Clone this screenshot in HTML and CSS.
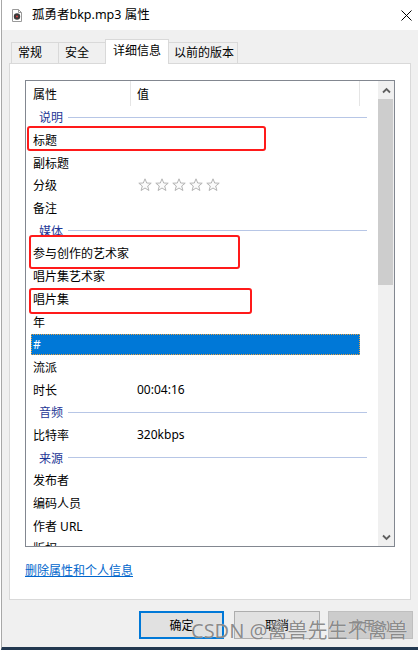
FILE: index.html
```html
<!DOCTYPE html>
<html lang="zh-CN">
<head>
<meta charset="utf-8">
<title>属性</title>
<link rel="stylesheet" href="styles.css">
</head>
<body>
<div class="window">
  <div class="titlebar">
    <svg class="file-icon" width="10" height="13" viewBox="0 0 10 13">
      <path d="M0.5 0.5 H6.5 L9.5 3.5 V12.5 H0.5 Z" fill="#fff" stroke="#9a9a9a"/>
      <path d="M6.5 0.5 V3.5 H9.5" fill="none" stroke="#9a9a9a"/>
      <circle cx="5" cy="7.5" r="3.2" fill="#3a3a3a"/>
      <circle cx="5" cy="7.5" r="1.1" fill="#d04040"/>
    </svg>
    <span class="title">孤勇者bkp.mp3 属性</span>
    <svg class="close" width="11" height="11" viewBox="0 0 11 11">
      <path d="M0.5 0.5 L10.5 10.5 M10.5 0.5 L0.5 10.5" stroke="#000" stroke-width="1"/>
    </svg>
  </div>
  <div class="client">
    <div class="tabs">
      <div class="tab tab-a">常规</div>
      <div class="tab tab-b">安全</div>
      <div class="tab tab-c active">详细信息</div>
      <div class="tab tab-d">以前的版本</div>
    </div>
    <div class="panel">
      <div class="listbox">
        <div class="list-main">
          <div class="header">
            <div class="hcell hcell-name">属性</div>
            <div class="hcell hcell-value">值</div>
          </div>
          <div class="rows">
            <div class="group">说明</div>
            <div class="row"><span class="k">标题</span></div>
            <div class="row"><span class="k">副标题</span></div>
            <div class="row"><span class="k">分级</span>
              <span class="stars">
                <svg width="85" height="14" viewBox="0 0 85 14">
                  <g fill="#fbfbfb" stroke="#b4b4b4" stroke-width="1" stroke-linejoin="round">
                    <polygon points="7,0.8 8.7,5 13.2,5.2 9.7,8 10.9,12.5 7,10 3.1,12.5 4.3,8 0.8,5.2 5.3,5"/>
                    <polygon transform="translate(17 0)" points="7,0.8 8.7,5 13.2,5.2 9.7,8 10.9,12.5 7,10 3.1,12.5 4.3,8 0.8,5.2 5.3,5"/>
                    <polygon transform="translate(34 0)" points="7,0.8 8.7,5 13.2,5.2 9.7,8 10.9,12.5 7,10 3.1,12.5 4.3,8 0.8,5.2 5.3,5"/>
                    <polygon transform="translate(51 0)" points="7,0.8 8.7,5 13.2,5.2 9.7,8 10.9,12.5 7,10 3.1,12.5 4.3,8 0.8,5.2 5.3,5"/>
                    <polygon transform="translate(68 0)" points="7,0.8 8.7,5 13.2,5.2 9.7,8 10.9,12.5 7,10 3.1,12.5 4.3,8 0.8,5.2 5.3,5"/>
                  </g>
                </svg>
              </span>
            </div>
            <div class="row"><span class="k">备注</span></div>
            <div class="group">媒体</div>
            <div class="row"><span class="k">参与创作的艺术家</span></div>
            <div class="row"><span class="k">唱片集艺术家</span></div>
            <div class="row"><span class="k">唱片集</span></div>
            <div class="row"><span class="k">年</span></div>
            <div class="row sel"><span class="k">#</span></div>
            <div class="row"><span class="k">流派</span></div>
            <div class="row"><span class="k">时长</span><span class="v">00:04:16</span></div>
            <div class="group">音频</div>
            <div class="row"><span class="k">比特率</span><span class="v">320kbps</span></div>
            <div class="group">来源</div>
            <div class="row"><span class="k">发布者</span></div>
            <div class="row"><span class="k">编码人员</span></div>
            <div class="row"><span class="k">作者 URL</span></div>
            <div class="row"><span class="k">版权</span></div>
          </div>
        </div>
        <div class="scrollbar">
          <div class="sb-btn">
            <svg width="9" height="7" viewBox="0 0 9 7"><path d="M1 5.5 L4.5 2 L8 5.5" fill="none" stroke="#606060" stroke-width="1.8"/></svg>
          </div>
          <div class="sb-thumb"></div>
          <div class="sb-track"></div>
          <div class="sb-btn">
            <svg width="9" height="7" viewBox="0 0 9 7"><path d="M1 1.5 L4.5 5 L8 1.5" fill="none" stroke="#606060" stroke-width="1.8"/></svg>
          </div>
        </div>
      </div>
      <a class="link" href="#">删除属性和个人信息</a>
    </div>
    <div class="buttons">
      <div class="btn btn-default">确定</div>
      <div class="btn btn-cancel">取消</div>
      <div class="btn btn-disabled">应用(A)</div>
    </div>
  </div>
</div>
<div class="mark mark-1"></div>
<div class="mark mark-2"></div>
<div class="mark mark-3"></div>
<div class="watermark">CSDN @禽兽先生不禽兽</div>
</body>
</html>
```
FILE: styles.css
```css
html, body {
  margin: 0;
  padding: 0;
}
body {
  width: 418px;
  height: 650px;
  overflow: hidden;
  position: relative;
  background: #ffffff;
  font-family: "Noto Sans", "Noto Sans CJK SC", sans-serif;
  font-size: 12px;
  color: #000;
}
.window {
  margin-left: 1px;
  height: 650px;
  box-sizing: border-box;
  border-left: 1px solid #a8a8a8;
  border-bottom: 3px solid #223850;
  display: flex;
  flex-direction: column;
}
.titlebar {
  height: 30px;
  flex: none;
  background: #fff;
  display: flex;
  align-items: center;
  padding-left: 10px;
}
.file-icon {
  margin-right: 10px;
  margin-top: 1px;
}
.title {
  font-size: 12.5px;
  line-height: 16px;
}
.close {
  margin-left: auto;
  margin-right: 6px;
}
.client {
  flex: 1;
  background: #f0f0f0;
  padding: 9px 0 0 7px;
  display: flex;
  flex-direction: column;
}
.tabs {
  display: flex;
  align-items: flex-end;
  height: 24px;
  padding-left: 2px;
  position: relative;
  z-index: 2;
}
.tab {
  height: 21px;
  box-sizing: border-box;
  border: 1px solid #d9d9d9;
  border-bottom: none;
  background: #f0f0f0;
  line-height: 19px;
  margin-left: -1px;
  white-space: nowrap;
}
.tab-a { width: 48px; padding-left: 6px; margin-left: 0; }
.tab-b { width: 48px; padding-left: 6px; }
.tab-c { width: 64px; padding-left: 7px; }
.tab-d { width: 70px; padding-left: 5px; }
.tab.active {
  height: 25px;
  background: #fff;
  margin-bottom: -1px;
  line-height: 21px;
  position: relative;
  z-index: 3;
}
.panel {
  width: 402px;
  height: 537px;
  box-sizing: border-box;
  border: 1px solid #d9d9d9;
  background: #fff;
  padding: 16px 0 0 15px;
  position: relative;
  z-index: 1;
}
.listbox {
  width: 370px;
  height: 467px;
  box-sizing: border-box;
  border: 1px solid #828790;
  display: flex;
  overflow: hidden;
}
.list-main {
  width: 352px;
  display: flex;
  flex-direction: column;
  overflow: hidden;
}
.header {
  height: 25px;
  flex: none;
  display: flex;
}
.hcell {
  height: 100%;
  box-sizing: border-box;
  display: flex;
  align-items: center;
  border-right: 1px solid #e5e5e5;
}
.hcell-name { width: 105px; padding-left: 7px; }
.hcell-value { width: 229px; padding-left: 6px; }
.rows {
  flex: 1;
  overflow: hidden;
}
.row {
  height: 22.7px;
  display: flex;
  align-items: center;
  margin-left: 5px;
  width: 329px;
  box-sizing: border-box;
  white-space: nowrap;
}
.row .k {
  width: 106px;
  padding-left: 2px;
  box-sizing: border-box;
}
.row.sel {
  background: #0078d7;
  color: #fff;
  outline: 1px dotted #e8a040;
  outline-offset: -1px;
  height: 21px;
  margin-top: 0.85px;
  margin-bottom: 0.85px;
}
.stars {
  display: flex;
  align-items: center;
  margin-left: 1px;
}
.group {
  height: 22.7px;
  display: flex;
  align-items: center;
  padding-left: 13px;
  color: #1e3796;
}
.group::after {
  content: "";
  flex: 1;
  height: 1px;
  background: #b7c6e6;
  margin-left: 5px;
  margin-right: 11px;
}
.scrollbar {
  width: 16px;
  background: #f0f0f0;
  display: flex;
  flex-direction: column;
}
.sb-btn {
  height: 18px;
  flex: none;
  display: flex;
  align-items: center;
  justify-content: center;
}
.sb-thumb {
  height: 186px;
  flex: none;
  background: #cdcdcd;
  margin-right: 1px;
}
.sb-track {
  flex: 1;
}
.link {
  display: inline-block;
  margin-top: 16px;
  line-height: 16px;
  color: #0066cc;
  text-decoration: underline;
}
.buttons {
  display: flex;
  justify-content: flex-end;
  margin-top: 11px;
  padding-right: 5px;
}
.btn {
  width: 86px;
  height: 28px;
  box-sizing: border-box;
  display: flex;
  align-items: center;
  justify-content: center;
  background: #e1e1e1;
  border: 1px solid #adadad;
}
.btn-default {
  border: 2px solid #0078d7;
  width: 85px;
}
.btn-cancel { margin-left: 10px; }
.btn-disabled {
  margin-left: 8px;
  width: 85px;
  background: #cccccc;
  border-color: #bfbfbf;
  color: #838383;
}
.mark {
  position: absolute;
  z-index: 10;
  box-sizing: border-box;
  border: 2.5px solid #ff1a1a;
  border-radius: 3px;
}
.mark-1 { left: 27px; top: 126px; width: 239px; height: 25px; }
.mark-2 { left: 29px; top: 235px; width: 211px; height: 34px; }
.mark-3 { left: 29px; top: 288px; width: 223px; height: 26px; }
.watermark {
  position: absolute;
  z-index: 11;
  left: 191px;
  top: 618px;
  font-size: 20px;
  line-height: 26px;
  color: rgba(110, 110, 110, 0.8);
  text-shadow: 0 0 1px rgba(255, 255, 255, 0.9);
  white-space: nowrap;
  font-family: "Noto Sans", "Noto Sans CJK SC", sans-serif;
}
```
